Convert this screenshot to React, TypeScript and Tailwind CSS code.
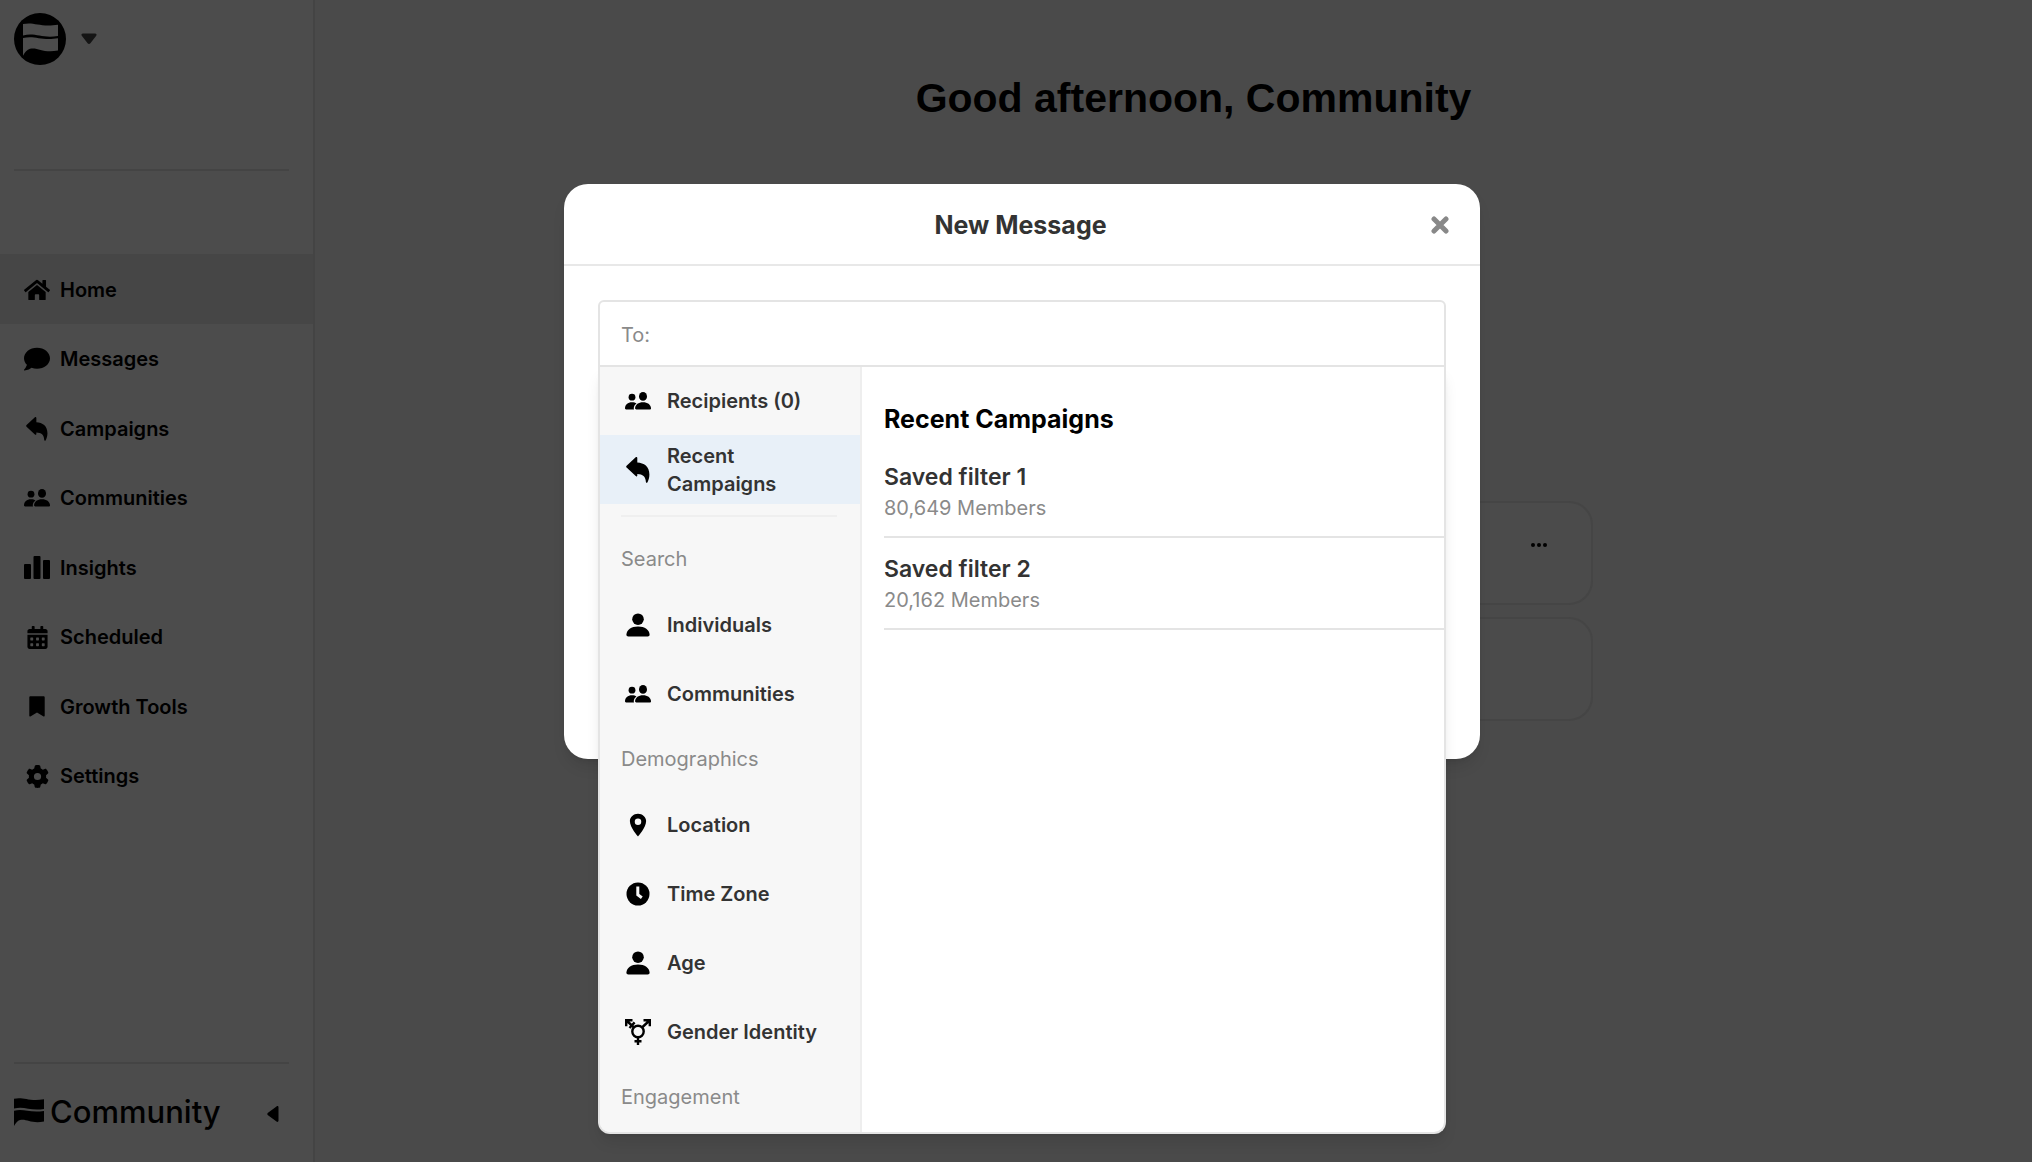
import React from "react";
import { FaHome, FaComment, FaCalendarAlt } from "react-icons/fa";
import { FaGear } from "react-icons/fa6";
import { IoLocationSharp } from "react-icons/io5";

type IconProps = { className?: string };

function ReplyIcon({ className }: IconProps) {
  return (
    <svg viewBox="0 0 24 26" fill="currentColor" className={className} aria-hidden="true">
      <path d="M11.300.9V5.600C18 5.900 23.400 9.600 23.400 17.600c0 3-.8 5.600-1.900 7.600-.6.9-1.500.7-1.600-.3-.4-5.500-3-7.900-8.600-8v1.500c0 .9-1 1.300-1.600.7L.6 10.600c-.6-.6-.6-1.300 0-1.900L9.700.3c.6-.6 1.600-.3 1.600.6z" />
    </svg>
  );
}

function PersonIcon({ className }: IconProps) {
  return (
    <svg viewBox="0 0 24 24" fill="currentColor" className={className} aria-hidden="true">
      <circle cx="12" cy="6.200" r="5.800" />
      <path d="M12 13.600c7 0 11.200 3.400 11.600 8 .1 1.200-.7 2-1.900 2H2.300c-1.200 0-2-.8-1.900-2 .4-4.600 4.600-8 11.600-8z" />
    </svg>
  );
}

function PeopleIcon({ className }: IconProps) {
  return (
    <svg viewBox="0 0 26 18" fill="currentColor" className={className} aria-hidden="true">
      <circle cx="7" cy="5.200" r="3.400" />
      <ellipse cx="18" cy="4.400" rx="4" ry="4.300" />
      <path d="M7 10.200c1.900 0 3.400.5 4.500 1.300-1.700 1.200-2.600 2.700-2.700 4.500 0 .6 0 1 .2 1.400H1.100c-.7 0-1.100-.5-1.100-1.200.2-3.600 2.700-6 7-6z" />
      <path d="M18 10.200c4.600 0 7.700 2.300 8 5.800.1.800-.4 1.400-1.200 1.400H11.300c-.8 0-1.300-.6-1.200-1.400.3-3.500 3.300-5.800 7.900-5.800z" />
    </svg>
  );
}

function BarsIcon({ className }: IconProps) {
  return (
    <svg viewBox="0 0 26 26" fill="currentColor" className={className} aria-hidden="true">
      <rect x="0" y="9" width="7" height="15" rx="1" />
      <rect x="9.500" y="1" width="7" height="23" rx="1" />
      <rect x="19" y="5" width="7" height="19" rx="1" />
    </svg>
  );
}

function BookmarkIcon({ className }: IconProps) {
  return (
    <svg viewBox="0 0 16 21" fill="currentColor" className={className} aria-hidden="true">
      <path d="M1.200.3h13.600c.5 0 .9.400.9.900v18.600c0 .7-.6 1-1.100.6L8 16.600 1.400 20.400c-.5.4-1.100.1-1.100-.6V1.200c0-.5.4-.9.9-.9z" />
    </svg>
  );
}

function ClockIcon({ className }: IconProps) {
  return (
    <svg viewBox="0 0 24 24" className={className} aria-hidden="true">
      <circle cx="12" cy="12" r="11.500" fill="currentColor" />
      <path d="M11.800 4.600v8.200l4 3" fill="none" stroke="#f7f7f7" strokeWidth="3" />
    </svg>
  );
}

function GenderIcon({ className }: IconProps) {
  return (
    <svg viewBox="0 0 26 26" fill="none" stroke="currentColor" strokeWidth="2.400" className={className} aria-hidden="true">
      <circle cx="13" cy="12.500" r="5.700" />
      <path d="M17 8.500L24.500 1.500M18.500 1.200H24.800V7.200" />
      <path d="M9 8.500L1.500 1.500M7.500 1.200H1.200V7.200M9.600 3.400L4.500 9" />
      <path d="M13 18.200V26M9.500 22.200H16.500" />
    </svg>
  );
}

function FlagIcon({ className }: IconProps) {
  return (
    <svg viewBox="0 0 30 28" fill="currentColor" className={className} aria-hidden="true">
      <path d="M0 .8C9-1.500 14 3.600 30 1.300V11C16 13.200 11 8 0 10.500z" />
      <path d="M0 12.800C10 10.300 15 15.200 30 13V23.500C17 26 13 20.500 6 22 3.500 22.800 1.600 25 0 28z" />
    </svg>
  );
}

const NAV = [
  { label: "Home", icon: <FaHome className="size-[26px]" /> },
  { label: "Messages", icon: <FaComment className="size-[26px]" /> },
  { label: "Campaigns", icon: <ReplyIcon className="h-[26px] w-[22px]" /> },
  { label: "Communities", icon: <PeopleIcon className="h-[18px] w-[26px]" /> },
  { label: "Insights", icon: <BarsIcon className="size-[26px]" /> },
  { label: "Scheduled", icon: <FaCalendarAlt className="size-[23px]" /> },
  { label: "Growth Tools", icon: <BookmarkIcon className="h-[21px] w-4" /> },
  { label: "Settings", icon: <FaGear className="size-[23px]" /> },
];

function Sidebar() {
  return (
    <aside className="flex w-[315px] shrink-0 flex-col border-r-2 border-[#444444] bg-[#4c4c4c]">
      <div className="px-3.5 pt-[13px]">
        <button type="button" aria-label="Switch account" className="flex items-center gap-[15px]">
          <span className="flex size-[52px] items-center justify-center rounded-full bg-black">
            <FlagIcon className="h-[33px] w-[35px] text-[#4c4c4c]" />
          </span>
          <svg viewBox="0 0 16 12" className="h-3 w-4 text-[#141414]" aria-hidden="true">
            <path d="M2 .5h12c1.500 0 2 1.200 1.200 2.200l-5.800 7.600c-.8 1-2 1-2.800 0L.8 2.700C0 1.700.5.5 2 .5z" fill="currentColor" />
          </svg>
        </button>
      </div>
      <hr className="ml-3.5 mr-6 mt-[104px] border-t-2 border-[#444444]" />
      <nav className="mt-[83px] flex h-[556px] flex-col">
        {NAV.map((item, i) => (
          <a
            key={item.label}
            href="#"
            className={
              i === 0
                ? "flex flex-1 items-center gap-2.5 bg-[#464646] pl-6 pt-0.5"
                : "flex flex-1 items-center gap-2.5 pl-6 pt-0.5"
            }
          >
            <span className="flex w-[26px] justify-center">{item.icon}</span>
            <span className="text-[20px] leading-7 font-semibold">{item.label}</span>
          </a>
        ))}
      </nav>
      <div className="mt-auto h-[100px]">
        <hr className="ml-3.5 mr-6 border-t-2 border-[#444444]" />
        <div className="flex items-center pl-3.5 pr-[34px] pt-6">
          <FlagIcon className="h-7 w-[30px]" />
          <span className="ml-1.5 text-[31px] leading-[48px] font-medium">Community</span>
          <button type="button" aria-label="Collapse sidebar" className="ml-auto pt-1">
            <svg viewBox="0 0 12 16" className="h-4 w-3" aria-hidden="true">
              <path d="M11.500 1.500v13c0 1.300-1 1.800-2 1L1 9.300c-.9-.7-.9-1.900 0-2.600L9.500.5c1-.8 2-.3 2 1z" fill="currentColor" />
            </svg>
          </button>
        </div>
      </div>
    </aside>
  );
}

function Home() {
  return (
    <main className="flex flex-1 flex-col items-center bg-[#4a4a4a] pl-10">
      <h1 className="mt-[68px] font-['Liberation_Sans',Arial,sans-serif] text-[41px] leading-[60px] font-bold">
        Good afternoon, Community
      </h1>
      <div className="mt-[373px] flex w-full max-w-[798px] flex-col gap-3">
        <section className="flex h-[104px] items-start justify-end rounded-3xl border-2 border-[#454545] bg-[#4b4b4b] px-11 pt-9">
          <button type="button" aria-label="More options" className="flex gap-0.5 py-1">
            <span className="size-1 rounded-full bg-black" />
            <span className="size-1 rounded-full bg-black" />
            <span className="size-1 rounded-full bg-black" />
          </button>
        </section>
        <section className="h-[104px] rounded-3xl border-2 border-[#454545] bg-[#4b4b4b]" />
      </div>
    </main>
  );
}

function MenuItem({ icon, label, active }: { icon: React.ReactNode; label: string; active?: boolean }) {
  return (
    <button
      type="button"
      className={
        active
          ? "flex h-[69px] w-full items-center gap-4 bg-[#e8f0f8] pl-[25px] pr-6 text-left"
          : "flex h-[69px] w-full items-center gap-4 pl-[25px] pr-6 text-left"
      }
    >
      <span className="flex w-[26px] shrink-0 justify-center text-black">{icon}</span>
      <span className="text-[20px] leading-7 font-semibold text-[#333333]">{label}</span>
    </button>
  );
}

function MenuHeading({ children }: { children: React.ReactNode }) {
  return <h3 className="pl-[21px] text-[20px] leading-[62px] text-[#8a8a8a]">{children}</h3>;
}

function FilterRow({ name, members }: { name: string; members: string }) {
  return (
    <li className="border-b-2 border-[#e4e4e4]">
      <button type="button" className="flex h-[90px] w-full flex-col justify-center pt-0.5 text-left">
        <span className="text-[23px] leading-8 font-semibold text-[#333333]">{name}</span>
        <span className="text-[20px] leading-[30px] text-[#8a8a8a]">{members}</span>
      </button>
    </li>
  );
}

function NewMessage() {
  return (
    <div className="absolute inset-0 flex items-start justify-center pl-3 pt-[184px]">
      <div role="dialog" aria-labelledby="dialog-title" className="h-[575px] w-full max-w-[916px] rounded-3xl bg-white shadow-lg">
        <header className="grid h-[82px] grid-cols-[1fr_auto_1fr] items-center border-b-2 border-[#e8e8e8] pl-7 pr-[31px] pt-0.5">
          <h2 id="dialog-title" className="col-start-2 text-[25px] leading-8 font-bold text-[#333333]">New Message</h2>
          <button type="button" aria-label="Close" className="justify-self-end text-[#888888]">
            <svg viewBox="0 0 18 18" className="size-[18px]" fill="none" stroke="currentColor" strokeWidth="5" strokeLinecap="round" aria-hidden="true">
              <path d="M3 3l12 12M15 3L3 15" />
            </svg>
          </button>
        </header>
        <div className="px-[34px] pt-[34px]">
          <div className="flex h-[67px] items-center rounded-t-md border-2 border-[#e4e4e4] px-[21px] pt-0.5">
            <label htmlFor="to" className="text-[20px] leading-7 text-[#8a8a8a]">To:</label>
            <input id="to" type="text" className="ml-2 flex-1 text-[20px] outline-none" />
          </div>
          <div className="flex h-[767px] overflow-hidden rounded-b-xl border-x-2 border-b-2 border-[#e4e4e4] bg-white shadow-lg">
            <div className="w-[262px] shrink-0 overflow-hidden border-r-2 border-[#eeeeee] bg-[#f7f7f7]">
              <div className="-mt-px">
                <MenuItem icon={<PeopleIcon className="h-[18px] w-[26px]" />} label="Recipients (0)" />
                <MenuItem active icon={<ReplyIcon className="h-[26px] w-6" />} label="Recent Campaigns" />
              </div>
              <hr className="ml-[21px] mr-[23px] mt-[11px] mb-[11px] border-t-2 border-[#efefef]" />
              <MenuHeading>Search</MenuHeading>
              <MenuItem icon={<PersonIcon className="size-6" />} label="Individuals" />
              <MenuItem icon={<PeopleIcon className="h-[18px] w-[26px]" />} label="Communities" />
              <MenuHeading>Demographics</MenuHeading>
              <MenuItem icon={<IoLocationSharp className="size-[26px]" />} label="Location" />
              <MenuItem icon={<ClockIcon className="size-6" />} label="Time Zone" />
              <MenuItem icon={<PersonIcon className="size-6" />} label="Age" />
              <MenuItem icon={<GenderIcon className="size-[26px]" />} label="Gender Identity" />
              <MenuHeading>Engagement</MenuHeading>
            </div>
            <div className="flex-1 pl-[22px] pt-9">
              <h3 className="text-[25px] leading-8 font-bold text-black">Recent Campaigns</h3>
              <ul className="mt-[11px]">
                <FilterRow name="Saved filter 1" members="80,649 Members" />
                <FilterRow name="Saved filter 2" members="20,162 Members" />
              </ul>
            </div>
          </div>
        </div>
      </div>
    </div>
  );
}

export default function App() {
  return (
    <div className="relative flex min-h-screen font-[Inter,sans-serif] text-black">
      <Sidebar />
      <Home />
      <NewMessage />
    </div>
  );
}
